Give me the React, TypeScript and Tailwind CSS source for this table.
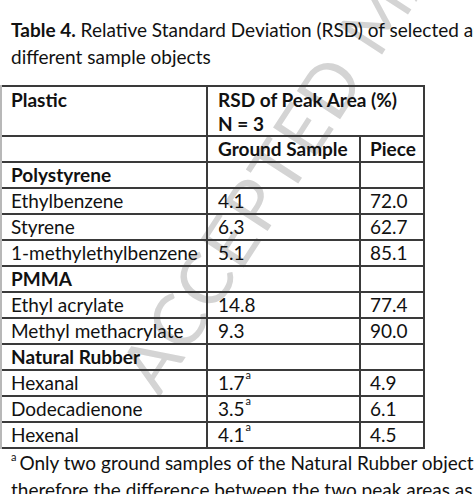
import React from 'react';

type Row = {
  name: string;
  ground?: string;
  piece?: string;
  group?: boolean;
  note?: boolean;
};

const rows: Row[] = [
  { name: 'Polystyrene', group: true },
  { name: 'Ethylbenzene', ground: '4.1', piece: '72.0' },
  { name: 'Styrene', ground: '6.3', piece: '62.7' },
  { name: '1-methylethylbenzene', ground: '5.1', piece: '85.1' },
  { name: 'PMMA', group: true },
  { name: 'Ethyl acrylate', ground: '14.8', piece: '77.4' },
  { name: 'Methyl methacrylate', ground: '9.3', piece: '90.0' },
  { name: 'Natural Rubber', group: true },
  { name: 'Hexanal', ground: '1.7', piece: '4.9', note: true },
  { name: 'Dodecadienone', ground: '3.5', piece: '6.1', note: true },
  { name: 'Hexenal', ground: '4.1', piece: '4.5', note: true },
];

// each cell draws its own right and bottom rule
const cell = 'h-[26px] border-r-2 border-b-2 border-[#3a3a3a] flex items-center leading-[22px] whitespace-nowrap';

function Sup() {
  return <sup className="text-[11px] leading-none ml-[1px] -translate-y-[3px]">a</sup>;
}

export default function App() {
  return (
    <div className="relative w-[474px] h-[494px] overflow-hidden bg-white text-[#111] font-['Lato','Liberation_Sans',sans-serif] text-[19px]">
      {/* ACCEPTED MANUSCRIPT watermark */}
      <div className="absolute left-[166px] top-[330px] origin-bottom-left -rotate-[57deg] whitespace-nowrap text-[72px] leading-[72px] font-normal tracking-[2px] text-[#d4d4d4] select-none pointer-events-none">
        ACCEPTED MANUSCRIPT
      </div>

      <div className="relative">
        <div className="pt-[16px] pl-[11px] leading-[27px] whitespace-nowrap">
          <p>
            <span className="font-bold">Table 4.</span> Relative Standard Deviation (RSD) of selected analytes for
          </p>
          <p>different sample objects</p>
        </div>

        <div className="mt-[15px] w-[425px] border-l-2 border-[#b8b8b8]">
          <div className="grid grid-cols-[206px_153px_64px] border-t-2 border-[#3a3a3a]">
            <div className="h-[50px] border-r-2 border-b-2 border-[#3a3a3a] pl-[9px] pt-[1px] leading-[24px] font-bold">
              Plastic
            </div>
            <div className="col-span-2 h-[50px] border-r-2 border-b-2 border-[#3a3a3a] pl-[10px] pt-[1px] leading-[24px] font-bold">
              RSD of Peak Area (%)
              <br />N = 3
            </div>

            <div className={`${cell} pl-[9px]`} />
            <div className={`${cell} pl-[10px] font-bold`}>Ground Sample</div>
            <div className={`${cell} pl-[9px] font-bold`}>Piece</div>

            {rows.map((r) => (
              <React.Fragment key={r.name}>
                <div className={`${cell} pl-[9px] ${r.group ? 'font-bold' : ''}`}>{r.name}</div>
                <div className={`${cell} pl-[10px]`}>
                  {r.ground}
                  {r.note && <Sup />}
                </div>
                <div className={`${cell} pl-[9px]`}>{r.piece}</div>
              </React.Fragment>
            ))}
          </div>
        </div>

        <div className="pl-[11px] leading-[27px] whitespace-nowrap">
          <p>
            <sup className="text-[11px] leading-none mr-[3px] -translate-y-[4px] inline-block">a</sup>Only two ground samples of the Natural Rubber object were analysed,
          </p>
          <p>therefore the difference between the two peak areas as a percentage is reported.</p>
        </div>
      </div>
    </div>
  );
}
